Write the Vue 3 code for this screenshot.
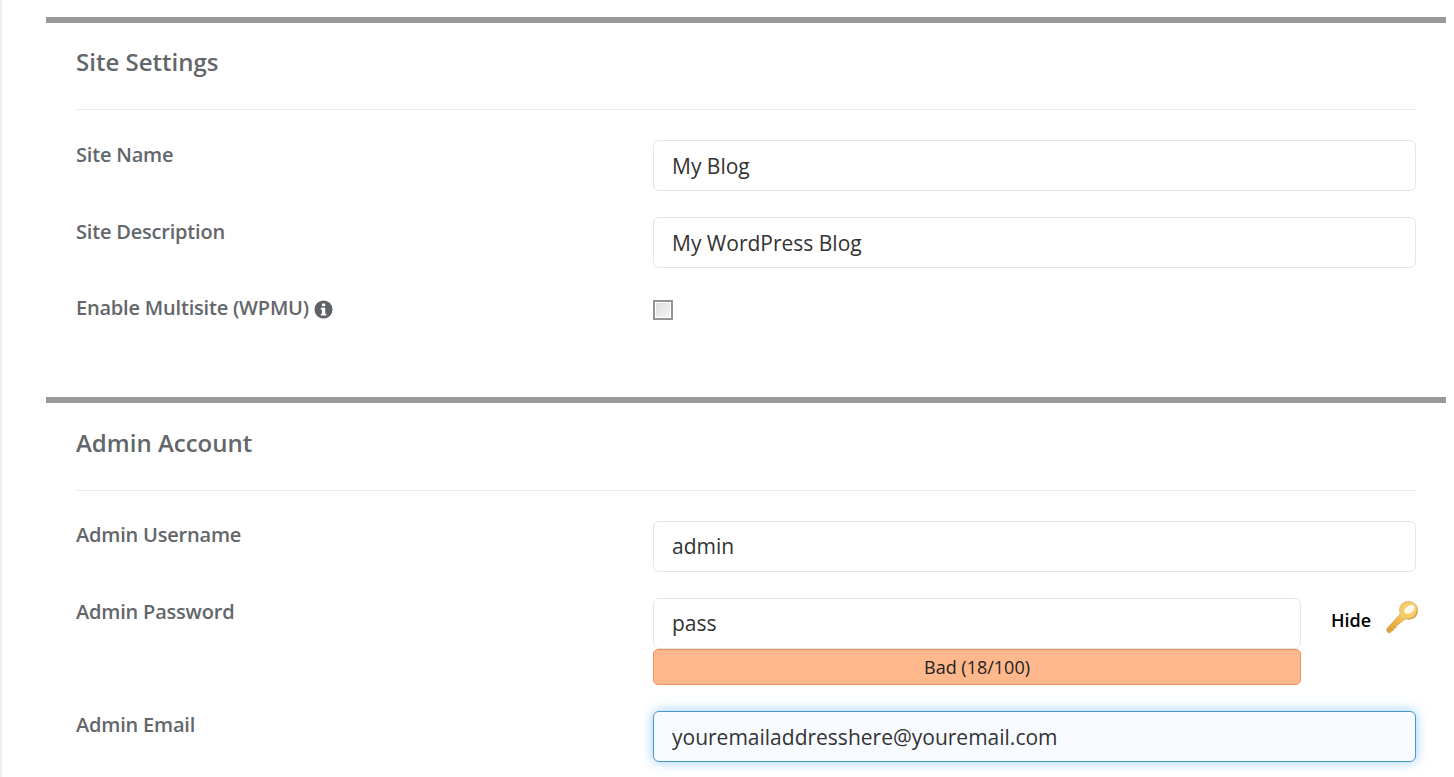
<template>
  <div class="page">
    <section class="panel">
      <h2 class="panel-title">Site Settings</h2>
      <div class="rows">
        <div class="row">
          <label class="row-label">Site Name</label>
          <div class="row-field"><input class="text-input" type="text" value="My Blog"></div>
        </div>
        <div class="row">
          <label class="row-label">Site Description</label>
          <div class="row-field"><input class="text-input" type="text" value="My WordPress Blog"></div>
        </div>
        <div class="row row-check">
          <label class="row-label">
            Enable Multisite (WPMU)
            <svg class="info-icon" viewBox="0 0 20 20">
              <circle cx="10" cy="10" r="9.5" fill="#5f6368" />
              <rect x="8.4" y="3.6" width="3.4" height="3" rx="0.6" fill="#fff" />
              <path d="M7.2 8.2h4.6v6.2h1.2v2H7.2v-2h1.2v-4.2H7.2z" fill="#fff" />
            </svg>
          </label>
          <div class="row-field"><input class="check-input" type="checkbox"></div>
        </div>
      </div>
    </section>

    <section class="panel panel-admin">
      <h2 class="panel-title">Admin Account</h2>
      <div class="rows">
        <div class="row">
          <label class="row-label">Admin Username</label>
          <div class="row-field"><input class="text-input" type="text" value="admin"></div>
        </div>
        <div class="row">
          <label class="row-label">Admin Password</label>
          <div class="row-field password-field">
            <div class="password-main">
              <input class="text-input" type="text" value="pass">
              <div class="strength">Bad (18/100)</div>
            </div>
            <div class="password-tools">
              <span class="hide-link">Hide</span>
              <svg class="key-icon" viewBox="0 0 36 36">
                <defs>
                  <linearGradient id="keyShaft" x1="0" y1="1" x2="1" y2="0">
                    <stop offset="0" stop-color="#dd9a32" />
                    <stop offset="1" stop-color="#fbd35f" />
                  </linearGradient>
                  <linearGradient id="keyRing" x1="0" y1="0" x2="1" y2="1">
                    <stop offset="0" stop-color="#e2b878" />
                    <stop offset="0.5" stop-color="#f3cf7a" />
                    <stop offset="1" stop-color="#c9974f" />
                  </linearGradient>
                </defs>
                <path d="M17.5 13.6 3 29.4l-.4 2.2 1.7 2.2 2.2-.2 1-1.7 1.8-.3.4-2 2-.5.5-2L24 18z" fill="url(#keyShaft)" stroke="#d3954a" stroke-width="0.6" />
                <circle cx="24.6" cy="11.4" r="8.6" fill="#f8cd62" stroke="url(#keyRing)" stroke-width="2" />
                <ellipse cx="25.4" cy="10.4" rx="5.8" ry="3.8" fill="#fdf8ea" transform="rotate(-32 25.4 10.4)" />
              </svg>
            </div>
          </div>
        </div>
        <div class="row">
          <label class="row-label">Admin Email</label>
          <div class="row-field"><input class="text-input is-focused" type="text" value="youremailaddresshere@youremail.com"></div>
        </div>
      </div>
    </section>
  </div>
</template>

<script setup>
</script>

<style>
html, body { background: #fff; overflow: hidden; }
</style>

<style scoped>
.page {
  height: 777px;
  box-sizing: border-box;
  padding: 17px 8px 0 44px;
  border-left: 2px solid #efefef;
  font-family: "Open Sans", sans-serif;
  color: #63666a;
  overflow: hidden;
}
.panel {
  border-top: 6px solid #999;
  padding: 0 30px;
  height: 374px;
}
.panel-title {
  margin: 0;
  height: 87px;
  box-sizing: border-box;
  padding-bottom: 10px;
  display: flex;
  align-items: center;
  font-size: 24px;
  font-weight: 600;
  border-bottom: 1px solid #eee;
}
.panel-admin .panel-title {
  height: 88px;
  padding-bottom: 9px;
}
.rows {
  padding-top: 30px;
  display: flex;
  flex-direction: column;
  gap: 26px;
}
.row {
  display: grid;
  grid-template-columns: 577px 1fr;
}
.row-label {
  font-size: 20px;
  font-weight: 600;
  line-height: 28px;
  padding-top: 1px;
  letter-spacing: -0.2px;
}
.panel-admin .row-label { padding-top: 0; }
.text-input {
  display: block;
  width: 100%;
  height: 51px;
  box-sizing: border-box;
  padding: 0 18px;
  border: 1px solid #e6e6e6;
  border-radius: 6px;
  background: #fff;
  font-family: inherit;
  font-size: 21px;
  color: #333;
  outline: none;
}
.panel-admin .text-input { padding-bottom: 2px; }
.panel-admin .text-input.is-focused { padding-bottom: 0; }
.text-input.is-focused {
  border-color: #4a96c8;
  background: #f8fbff;
  box-shadow: 0 0 12px rgba(82, 168, 236, 0.6);
}
.row-check { margin-top: 6px; }
.row-check .row-label { margin-top: -7px; }
.info-icon {
  width: 19px;
  height: 19px;
  vertical-align: -4px;
}
.check-input {
  appearance: none;
  display: block;
  width: 20px;
  height: 20px;
  margin: 0;
  box-sizing: border-box;
  border: 2px solid #949494;
  background: linear-gradient(135deg, #dcdcdc, #f6f6f6);
  box-shadow: inset 0 0 0 1px #fff;
}
.password-field {
  display: flex;
  align-items: flex-start;
}
.password-main { width: 648px; }
.password-tools {
  display: flex;
  align-items: center;
  margin-left: 30px;
  height: 44px;
  gap: 13px;
}
.hide-link {
  font-size: 18px;
  font-weight: 600;
  color: #000;
}
.key-icon {
  width: 36px;
  height: 36px;
  margin-top: -6px;
}
.strength {
  height: 36px;
  box-sizing: border-box;
  border: 1px solid #ec9460;
  border-radius: 5px;
  background: #ffb78c;
  color: #222;
  font-size: 18px;
  line-height: 34px;
  text-align: center;
}
</style>
